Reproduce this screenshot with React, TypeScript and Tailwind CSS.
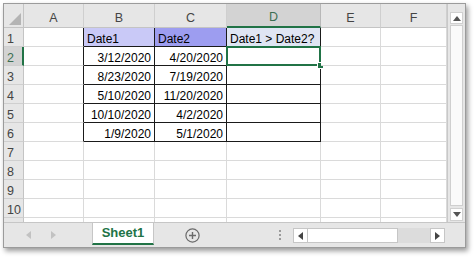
import React from 'react';

const FONT = { fontFamily: '"Liberation Sans", Arial, sans-serif' };

const cols = [
  { key: 'A', w: 'w-[60px]' },
  { key: 'B', w: 'w-[71px]' },
  { key: 'C', w: 'w-[72px]' },
  { key: 'D', w: 'w-[94px]' },
  { key: 'E', w: 'w-[60px]' },
  { key: 'F', w: 'w-[66px]' },
];

type Cell = { text: string; align?: 'left' | 'right'; bg?: string };

const data: Record<number, Record<string, Cell>> = {
  1: {
    B: { text: 'Date1', bg: 'bg-[#c9c9f7]' },
    C: { text: 'Date2', bg: 'bg-[#9d9df0]' },
    D: { text: 'Date1 > Date2?', bg: 'bg-[#dfe5f3]' },
  },
  2: { B: { text: '3/12/2020', align: 'right' }, C: { text: '4/20/2020', align: 'right' } },
  3: { B: { text: '8/23/2020', align: 'right' }, C: { text: '7/19/2020', align: 'right' } },
  4: { B: { text: '5/10/2020', align: 'right' }, C: { text: '11/20/2020', align: 'right' } },
  5: { B: { text: '10/10/2020', align: 'right' }, C: { text: '4/2/2020', align: 'right' } },
  6: { B: { text: '1/9/2020', align: 'right' }, C: { text: '5/1/2020', align: 'right' } },
};

const rows = [1, 2, 3, 4, 5, 6, 7, 8, 9, 10];

function ColumnHeader() {
  return (
    <div className="flex h-[24px]">
      <div className="relative w-[20px] h-full bg-[#e6e6e6] border-r border-b border-[#c4c4c4]">
        <svg className="absolute right-[2px] bottom-[2px]" width="12" height="12" viewBox="0 0 12 12">
          <polygon points="12,0 12,12 0,12" fill="#b4b4b4" />
        </svg>
      </div>
      {cols.map((c) => {
        const sel = c.key === 'D';
        return (
          <div
            key={c.key}
            className={`${c.w} h-full flex items-end justify-center leading-[14px] pb-[2px] text-[12.5px] border-r ${
              sel
                ? 'bg-[#d3d3d3] text-[#3c6e52] border-r-[#b8b8b8] border-b-2 border-b-[#217346]'
                : 'bg-[#e6e6e6] text-[#444] border-r-[#cfcfcf] border-b border-b-[#c4c4c4]'
            }`}
          >
            {c.key}
          </div>
        );
      })}
    </div>
  );
}

function Row({ n }: { n: number }) {
  const boxed = n <= 6;
  const selRow = n === 2;
  return (
    <div className={`flex h-[19px] ${selRow ? 'relative z-10' : ''}`}>
      <div
        className={`w-[20px] h-full flex items-end pl-[3px] leading-[14px] text-[12.5px] border-b border-b-[#cfcfcf] ${
          selRow
            ? 'bg-[#d3d3d3] text-[#3c6e52] border-r-2 border-r-[#217346]'
            : 'bg-[#e6e6e6] text-[#444] border-r border-r-[#c4c4c4]'
        }`}
      >
        {n}
      </div>
      {cols.map((c) => {
        const cell = data[n]?.[c.key];
        const inTable = boxed && (c.key === 'B' || c.key === 'C' || c.key === 'D');
        const leftOfTable = boxed && c.key === 'A';
        const right = inTable || leftOfTable ? 'border-r-[#1a1a1a]' : 'border-r-[#dadada]';
        const bottom = inTable ? 'border-b-[#1a1a1a]' : 'border-b-[#dadada]';
        return (
          <div
            key={c.key}
            className={`relative ${c.w} h-full flex items-end px-[3px] leading-[14px] text-[12px] text-black border-r border-b ${right} ${bottom} ${
              cell?.bg ?? 'bg-white'
            } ${cell?.align === 'right' ? 'justify-end' : 'justify-start'}`}
          >
            <span className="whitespace-nowrap">{cell?.text}</span>
            {n === 2 && c.key === 'D' && (
              <>
                <div className="absolute -left-[1px] -top-[1px] -right-[1px] -bottom-[1px] border-2 border-[#217346]" />
                <div className="absolute -right-[4px] -bottom-[4px] w-[7px] h-[7px] bg-[#217346] border border-white" />
              </>
            )}
          </div>
        );
      })}
    </div>
  );
}

function Tri({ dir, color }: { dir: 'up' | 'down' | 'left' | 'right'; color: string }) {
  const pts = {
    up: '0,5 4,0 8,5',
    down: '0,0 8,0 4,5',
    left: '5,0 5,8 0,4',
    right: '0,0 0,8 5,4',
  }[dir];
  const w = dir === 'up' || dir === 'down' ? 8 : 5;
  const h = dir === 'up' || dir === 'down' ? 5 : 8;
  return (
    <svg width={w} height={h} viewBox={`0 0 ${w} ${h}`}>
      <polygon points={pts} fill={color} />
    </svg>
  );
}

export default function App() {
  return (
    <div className="w-[474px] h-[259px] bg-white pl-[3px] pt-[3px]" style={FONT}>
      <div className="w-[463px] h-[245px] flex flex-col border border-[#9b9b9b] bg-[#e6e6e6] shadow-[2px_3px_5px_rgba(0,0,0,0.4)]">
        <div className="flex h-[218px] overflow-hidden">
          <div className="w-[443px] flex flex-col">
            <ColumnHeader />
            {rows.map((n) => (
              <Row key={n} n={n} />
            ))}
            <div className="flex h-[4px] bg-white">
              <div className="w-[20px] h-full bg-[#e6e6e6] border-r border-[#c4c4c4]" />
              {cols.map((c) => (
                <div key={c.key} className={`${c.w} h-full border-r border-[#dadada]`} />
              ))}
            </div>
          </div>
          <div className="flex-1 flex flex-col border-l border-[#c8c8c8] pl-[2px] pr-[2px] pt-[8px] pb-[1px]">
            <div className="h-[12px] bg-white border border-[#d0d0d0] flex items-center justify-center">
              <Tri dir="up" color="#555" />
            </div>
            <div className="flex-1 mt-[1px] mb-[2px] bg-[#fafafa] border border-[#cfcfcf]" />
            <div className="h-[13px] bg-white border border-[#d0d0d0] flex items-center justify-center">
              <Tri dir="down" color="#555" />
            </div>
          </div>
        </div>
        <div className="flex-1 flex border-t border-[#c6c6c6]">
          <div className="w-[88px] flex items-center">
            <div className="ml-[22px]">
              <Tri dir="left" color="#c2c2c2" />
            </div>
            <div className="ml-[20px]">
              <Tri dir="right" color="#c2c2c2" />
            </div>
          </div>
          <div className="w-[62px] h-[22px] bg-white border-l border-r border-[#c6c6c6] border-b-2 border-b-[#217346] flex items-center justify-center text-[13px] font-bold text-[#217346]">
            Sheet1
          </div>
          <div className="w-[76px] flex items-center justify-center">
            <svg width="15" height="15" viewBox="0 0 15 15">
              <circle cx="7.5" cy="7.5" r="6.6" fill="none" stroke="#6a6a6a" strokeWidth="1.2" />
              <path d="M7.5 4v7M4 7.5h7" stroke="#6a6a6a" strokeWidth="1.4" />
            </svg>
          </div>
          <div className="w-[48px]" />
          <div className="w-[4px] flex flex-col items-center justify-center gap-[2px]">
            <div className="w-[2px] h-[2px] bg-[#9a9a9a]" />
            <div className="w-[2px] h-[2px] bg-[#9a9a9a]" />
            <div className="w-[2px] h-[2px] bg-[#9a9a9a]" />
          </div>
          <div className="ml-[11px] mt-[5px] w-[152px] h-[15px] flex">
            <div className="w-[15px] h-full bg-white border border-[#c6c6c6] flex items-center justify-center">
              <Tri dir="left" color="#444" />
            </div>
            <div className="w-[90px] h-full bg-white border-t border-b border-r border-[#c6c6c6]" />
            <div className="flex-1 h-full bg-[#dcdcdc]" />
            <div className="w-[15px] h-full bg-white border border-[#c6c6c6] flex items-center justify-center">
              <Tri dir="right" color="#444" />
            </div>
          </div>
        </div>
      </div>
    </div>
  );
}
